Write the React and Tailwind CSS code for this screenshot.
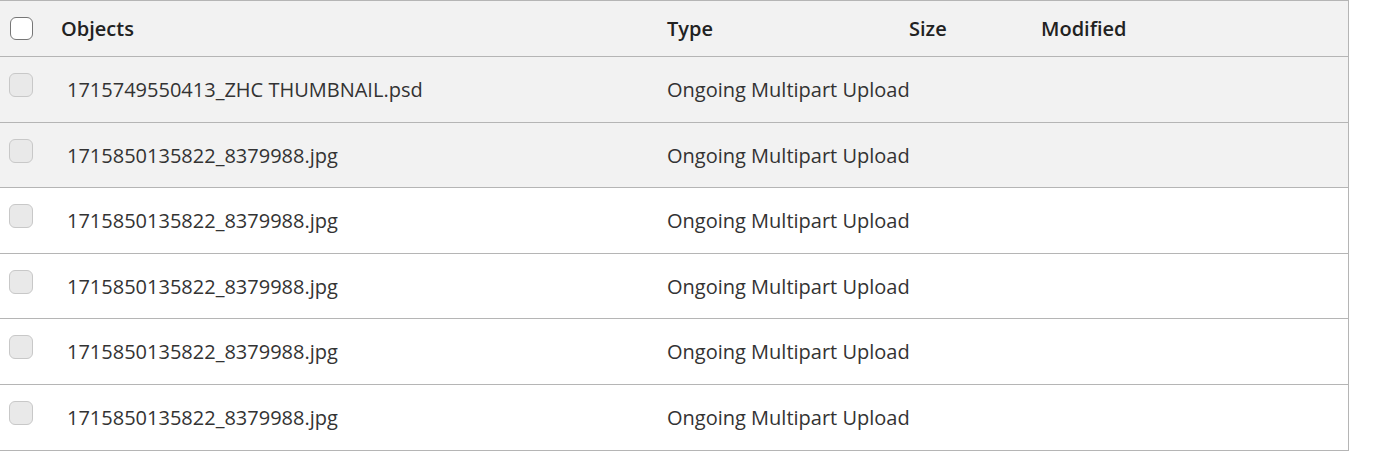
import React from 'react';

const rows = [
  { name: '1715749550413_ZHC THUMBNAIL.psd', type: 'Ongoing Multipart Upload', shaded: true },
  { name: '1715850135822_8379988.jpg', type: 'Ongoing Multipart Upload', shaded: true },
  { name: '1715850135822_8379988.jpg', type: 'Ongoing Multipart Upload' },
  { name: '1715850135822_8379988.jpg', type: 'Ongoing Multipart Upload' },
  { name: '1715850135822_8379988.jpg', type: 'Ongoing Multipart Upload' },
  { name: '1715850135822_8379988.jpg', type: 'Ongoing Multipart Upload' },
];

const font = { fontFamily: '"Open Sans", "Noto Sans", sans-serif' };

export default function App() {
  return (
    <div className="w-[1381px] h-[451px] bg-white" style={font}>
      <div className="w-[1349px] border-t border-r border-b border-[#b5b5b5]">
        {/* Hlavička tabulky */}
        <div className="flex items-center h-[56px] bg-[#f2f2f2] border-b border-[#b5b5b5] text-[20px] font-semibold text-[#222] whitespace-nowrap">
          <div className="w-[50px] pl-[10px] flex items-center">
            <span className="block w-[23px] h-[23px] rounded-[6px] border border-[#767676] bg-white" />
          </div>
          <div className="w-[606px] pl-[11px] pt-[1px]">Objects</div>
          <div className="w-[242px] pl-[11px] pt-[1px]">Type</div>
          <div className="w-[132px] pl-[11px] pt-[1px]">Size</div>
          <div className="pl-[11px] pt-[1px]">Modified</div>
        </div>
        {rows.map((r, i) => (
          <div
            key={i}
            className={`flex h-[65.5px] text-[20px] text-[#333] whitespace-nowrap ${i < rows.length - 1 ? 'border-b border-[#b5b5b5]' : ''} ${r.shaded ? 'bg-[#f2f2f2]' : 'bg-white'}`}
          >
            <div className="w-[50px] pl-[9px] pt-[16px]">
              <span className="block w-[24px] h-[24px] rounded-[6px] border border-[#c8c8c8] bg-[#e9e9e9]" />
            </div>
            <div className="w-[606px] pl-[17px] pt-[2px] flex items-center">{r.name}</div>
            <div className="w-[242px] pl-[11px] pt-[2px] flex items-center">{r.type}</div>
            <div className="w-[132px] pl-[11px]" />
            <div className="pl-[11px]" />
          </div>
        ))}
      </div>
    </div>
  );
}
